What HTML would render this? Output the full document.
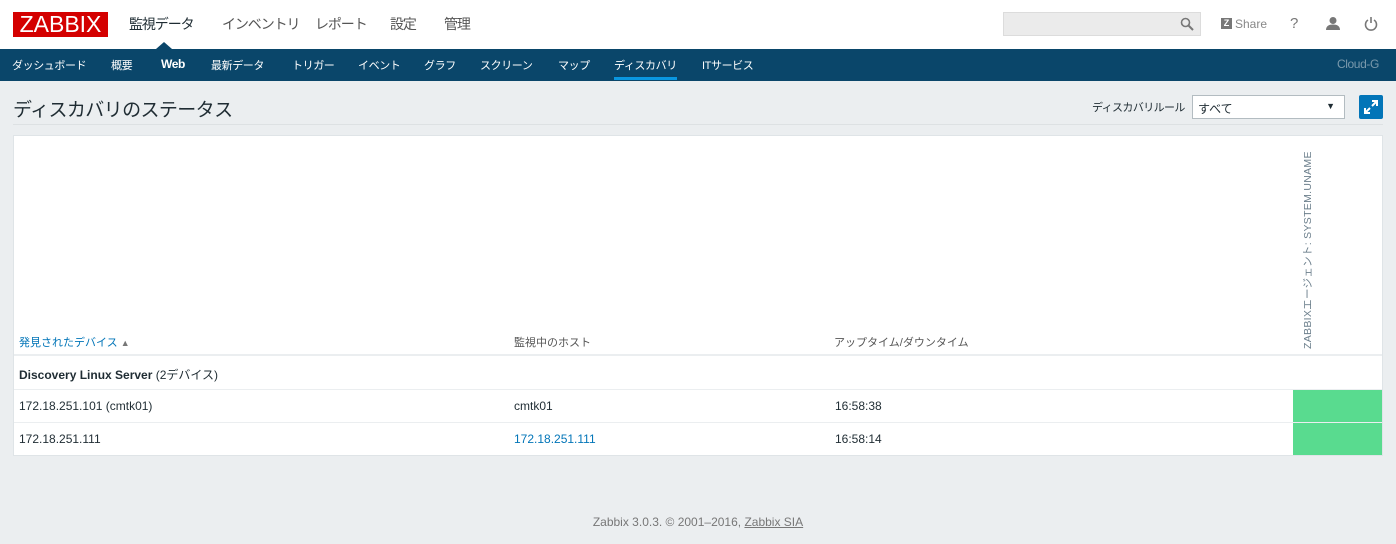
<!DOCTYPE html>
<html><head><meta charset="utf-8"><style>
*{margin:0;padding:0;box-sizing:border-box}
body{width:1396px;height:544px;background:#ebeef0;font-family:"Liberation Sans","Noto Sans CJK JP",sans-serif;font-size:12px;color:#1f2c33;position:relative;overflow:hidden}
.top{position:absolute;left:0;top:0;width:1396px;height:49px;background:#fff}
.logo{position:absolute;left:13px;top:12px;width:95px;height:25px;background:#d40000;color:#fff;font-size:23px;line-height:25px;text-align:center;letter-spacing:0px}
.mm{position:absolute;top:14px;font-size:14px;letter-spacing:-1.1px;color:#555}
.nav{position:absolute;left:0;top:49px;width:1396px;height:32px;background:#0a466a}
.nav span{position:absolute;top:8px;color:#fff;font-size:11px;letter-spacing:-0.4px}
.search{position:absolute;left:1003px;top:12px;width:198px;height:24px;background:#ebebeb;border:1px solid #dcdcdc}
.table{position:absolute;left:13px;top:135px;width:1370px;height:321px;background:#fff;border:1px solid #dfe4e7}
.row{position:absolute;left:0;width:1368px;border-top:1px solid #ebeef0}
.t{position:absolute;font-size:12px}
.g{position:absolute;left:1279px;width:89px;background:#59db8f}
</style></head><body>
<div class="top">
<div class="logo">ZABBIX</div>
<div class="mm" style="left:129px;color:#1f2c33">監視データ</div>
<div class="mm" style="left:222px">インベントリ</div>
<div class="mm" style="left:315px">レポート</div>
<div class="mm" style="left:390px">設定</div>
<div class="mm" style="left:444px">管理</div>
<div style="position:absolute;left:156px;top:42px;width:0;height:0;border-left:8px solid transparent;border-right:8px solid transparent;border-bottom:7px solid #0a466a"></div>
<div class="search"><svg style="position:absolute;right:6px;top:4px" width="14" height="14" viewBox="0 0 14 14"><circle cx="5.5" cy="5.5" r="4" fill="none" stroke="#777" stroke-width="1.6"/><path d="M8.5 8.5L13 13" stroke="#777" stroke-width="2"/></svg></div>
<div style="position:absolute;left:1221px;top:18px;width:11px;height:11px;background:#777;color:#fff;font-size:9px;font-weight:bold;line-height:11px;text-align:center">Z</div>
<div style="position:absolute;left:1235px;top:17px;color:#888;font-size:12px">Share</div>
<div style="position:absolute;left:1290px;top:15px;color:#777;font-size:15px">?</div>
<svg style="position:absolute;left:1326px;top:16px" width="14" height="15" viewBox="0 0 14 15"><circle cx="7" cy="4.5" r="3.5" fill="#777"/><path d="M0 14c0-4 3-5.5 7-5.5s7 1.5 7 5.5z" fill="#777"/></svg>
<svg style="position:absolute;left:1364px;top:16px" width="14" height="15" viewBox="0 0 14 15"><path d="M4 4A5.5 5.5 0 1 0 10 4" fill="none" stroke="#777" stroke-width="1.6"/><path d="M7 1v6" stroke="#777" stroke-width="1.6"/></svg>
</div>
<div class="nav">
<span style="left:12px">ダッシュボード</span><span style="left:111px">概要</span><span style="left:161px;font-weight:bold;font-size:12px">Web</span><span style="left:211px">最新データ</span><span style="left:292px">トリガー</span><span style="left:358px">イベント</span><span style="left:424px">グラフ</span><span style="left:480px">スクリーン</span><span style="left:558px">マップ</span><span style="left:614px">ディスカバリ</span><span style="left:702px">ITサービス</span>
<span style="left:1337px;color:#7a99ac;font-size:12px">Cloud-G</span>
<div style="position:absolute;left:614px;top:28px;width:63px;height:3px;background:#0a97e0"></div>
</div>
<div style="position:absolute;left:13px;top:95px;font-size:19px;letter-spacing:-0.6px;color:#1f2c33">ディスカバリのステータス</div>
<div style="position:absolute;left:13px;top:124px;width:1370px;height:1px;background:#dde1e3"></div>
<div style="position:absolute;left:1092px;top:99px;font-size:11px;letter-spacing:-0.6px">ディスカバリルール</div>
<div style="position:absolute;left:1192px;top:95px;width:153px;height:24px;background:#fff;border:1px solid #b3bcc1;padding:4px 5px;font-size:12px">すべて<span style="position:absolute;right:9px;top:5px;font-size:9px">▼</span></div>
<div style="position:absolute;left:1359px;top:95px;width:24px;height:24px;background:#0275b8;border-radius:2px"><svg width="24" height="24" viewBox="0 0 24 24"><path d="M13 6h5v5M18 6l-5 5M11 18H6v-5M6 18l5-5" fill="none" stroke="#fff" stroke-width="2"/></svg></div>
<div class="table">
<div class="t" style="left:5px;top:198px;color:#0275b8;font-size:11px">発見されたデバイス <span style="color:#777;font-size:9px">▲</span></div>
<div class="t" style="left:500px;top:198px;color:#555;font-size:11px">監視中のホスト</div>
<div class="t" style="left:820px;top:198px;color:#555;font-size:11px">アップタイム/ダウンタイム</div>
<div style="position:absolute;left:1286px;top:213px;transform:rotate(-90deg);transform-origin:0 0;white-space:nowrap;color:#6c7f8c;font-size:10.5px;letter-spacing:0.3px">ZABBIXエージェント: SYSTEM.UNAME</div>
<div class="row" style="top:218px;border-top:2px solid #ebeef0;height:34px"><div class="t" style="left:5px;top:10px"><b>Discovery Linux Server</b> (2デバイス)</div></div>
<div class="row" style="top:253px;height:33px"><div class="t" style="left:5px;top:9px">172.18.251.101 (cmtk01)</div><div class="t" style="left:500px;top:9px">cmtk01</div><div class="t" style="left:821px;top:9px">16:58:38</div><div class="g" style="top:0;height:32px"></div></div>
<div class="row" style="top:286px;height:33px"><div class="t" style="left:5px;top:9px">172.18.251.111</div><div class="t" style="left:500px;top:9px;color:#0275b8">172.18.251.111</div><div class="t" style="left:821px;top:9px">16:58:14</div><div class="g" style="top:0;height:32px"></div></div>
</div>
<div style="position:absolute;left:0;width:1396px;top:515px;text-align:center;color:#777;font-size:12px">Zabbix 3.0.3. © 2001–2016, <span style="text-decoration:underline">Zabbix SIA</span></div>
</body></html>
